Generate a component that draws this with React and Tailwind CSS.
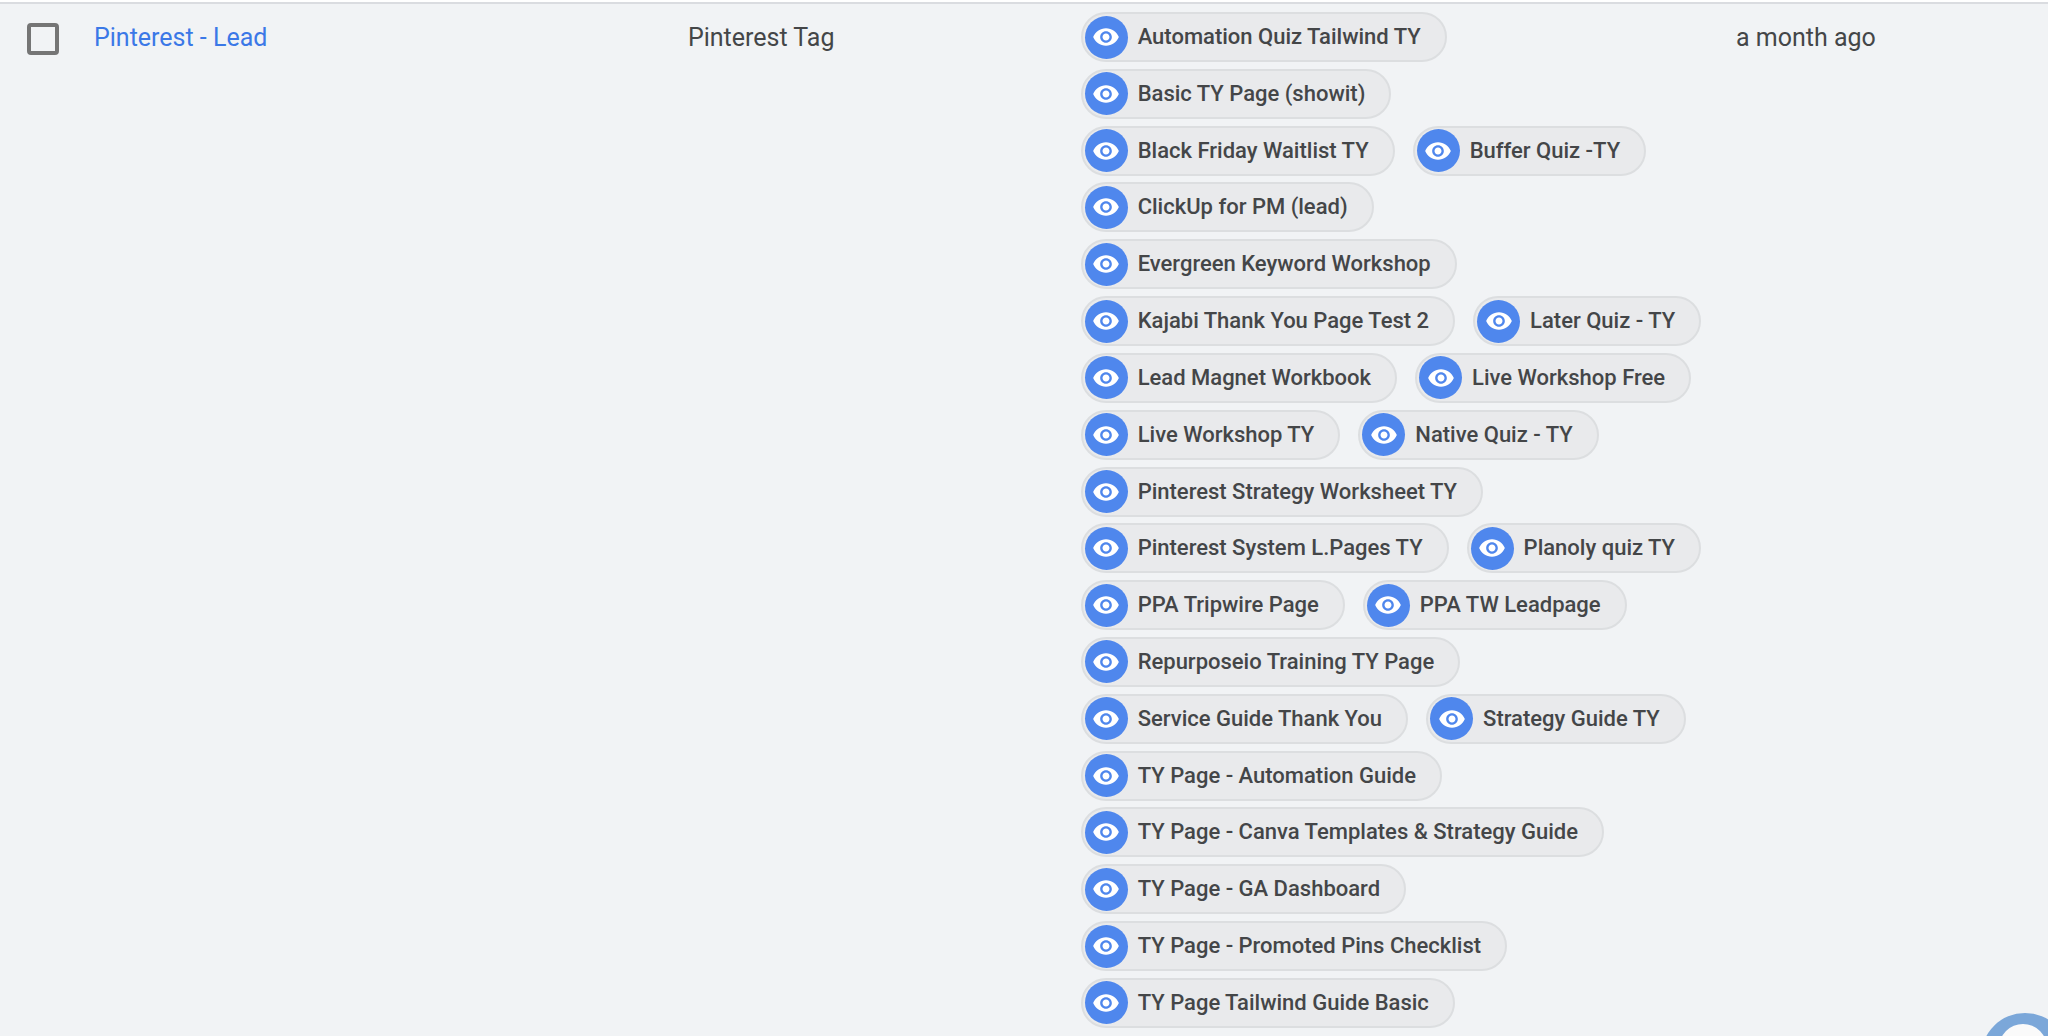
import React from 'react';

const tags = [
  {
    name: 'Pinterest - Lead',
    type: 'Pinterest Tag',
    edited: 'a month ago',
    triggers: [
      'Automation Quiz Tailwind TY',
      'Basic TY Page (showit)',
      'Black Friday Waitlist TY',
      'Buffer Quiz -TY',
      'ClickUp for PM (lead)',
      'Evergreen Keyword Workshop',
      'Kajabi Thank You Page Test 2',
      'Later Quiz - TY',
      'Lead Magnet Workbook',
      'Live Workshop Free',
      'Live Workshop TY',
      'Native Quiz - TY',
      'Pinterest Strategy Worksheet TY',
      'Pinterest System L.Pages TY',
      'Planoly quiz TY',
      'PPA Tripwire Page',
      'PPA TW Leadpage',
      'Repurposeio Training TY Page',
      'Service Guide Thank You',
      'Strategy Guide TY',
      'TY Page - Automation Guide',
      'TY Page - Canva Templates & Strategy Guide',
      'TY Page - GA Dashboard',
      'TY Page - Promoted Pins Checklist',
      'TY Page Tailwind Guide Basic',
    ],
  },
];

const EyeIcon = () => (
  <svg viewBox="0 0 24 24" className="w-7 h-7 fill-white" aria-hidden="true">
    <path d="M12 4.5C7 4.5 2.73 7.61 1 12c1.73 4.39 6 7.5 11 7.5s9.27-3.11 11-7.5c-1.73-4.39-6-7.5-11-7.5zM12 17c-2.76 0-5-2.24-5-5s2.24-5 5-5 5 2.24 5 5-2.24 5-5 5zm0-8c-1.66 0-3 1.34-3 3s1.34 3 3 3 3-1.34 3-3-1.34-3-3-3z" />
  </svg>
);

const TriggerChip = ({ label }) => (
  <button
    type="button"
    className="flex items-center gap-[10px] h-[50px] pl-[2px] pr-6 rounded-full border-2 border-[#dcdee0] bg-[#e9eaec] text-[22px] leading-6 font-medium text-[#444648] whitespace-nowrap cursor-pointer"
  >
    <span className="flex items-center justify-center w-[43px] h-[43px] rounded-full bg-[#4f87ed]">
      <EyeIcon />
    </span>
    {label}
  </button>
);

const TagRow = ({ tag }) => (
  <tr className="h-full align-top border-t-2 border-[#dadce0]">
    <td className="w-[94px] pl-[27px] pt-[19px]">
      <input
        type="checkbox"
        aria-label={`Select ${tag.name}`}
        className="block appearance-none w-8 h-8 rounded border-4 border-[#757575] checked:bg-[#757575]"
      />
    </td>
    <td className="w-[29%] pt-4">
      <a href="#tag" className="text-[#3b78e7]">{tag.name}</a>
    </td>
    <td className="pt-4">{tag.type}</td>
    <td className="w-[32%] h-full pt-2 pb-2 pr-6">
      <div className="h-full flex flex-wrap content-between gap-x-[18px]">
        {tag.triggers.map((trigger) => (
          <TriggerChip key={trigger} label={trigger} />
        ))}
      </div>
    </td>
    <td className="w-[312px] pt-4">{tag.edited}</td>
  </tr>
);

const HelpButton = () => (
  <button type="button" aria-label="Help" className="fixed -right-[21px] -bottom-[65px] cursor-pointer">
    <svg viewBox="0 0 88 88" className="block w-[88px] h-[88px]" aria-hidden="true">
      <circle cx="44" cy="44" r="44" fill="#7ba7d9" />
      <circle cx="42" cy="35" r="24" fill="#fafafa" />
    </svg>
  </button>
);

const App = () => (
  <div className="h-screen pt-[2px] bg-white font-['Roboto',sans-serif]">
    <table className="w-full h-full table-fixed border-collapse bg-[#f1f3f5] text-[25px] leading-9 text-[#444648]">
      <tbody>
        {tags.map((tag) => (
          <TagRow key={tag.name} tag={tag} />
        ))}
      </tbody>
    </table>
    <HelpButton />
  </div>
);

export default App;
